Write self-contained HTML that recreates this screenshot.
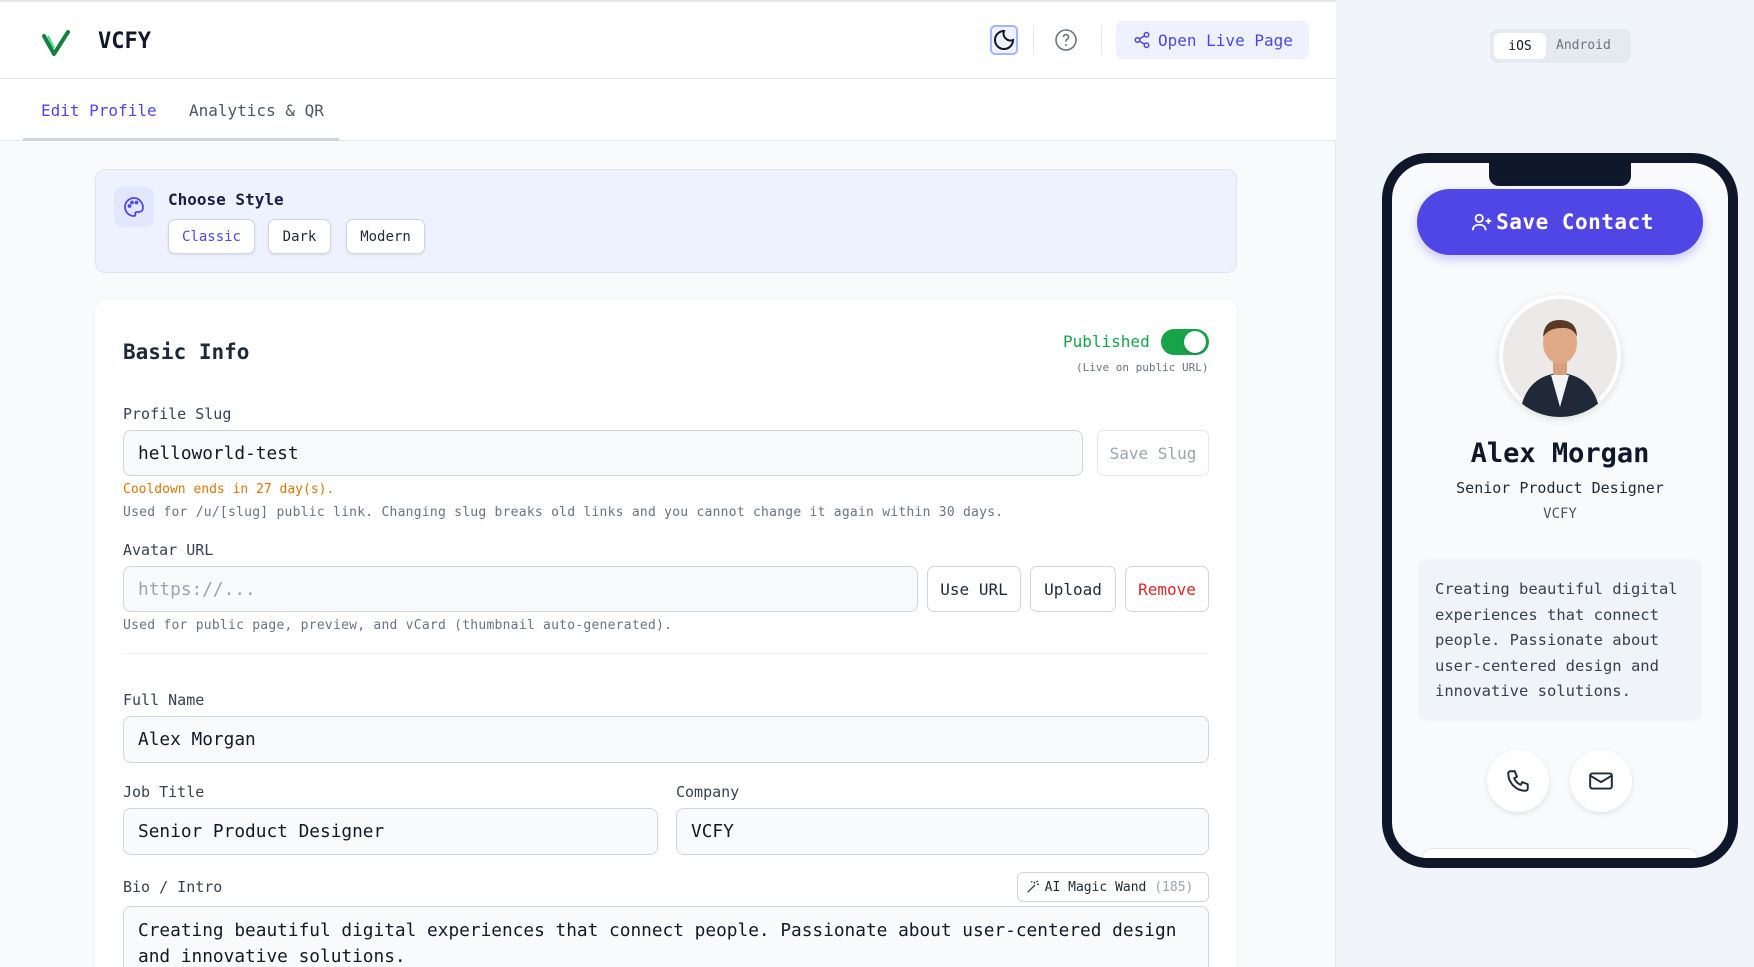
<!DOCTYPE html>
<html style="width:1754px;height:967px;overflow:hidden"><head><meta charset="utf-8"><style>
*{box-sizing:border-box;margin:0;padding:0}
body{width:1754px;height:967px;overflow:hidden;background:#f1f5f9;font-family:"DejaVu Sans Mono","Liberation Mono",monospace;color:#1e293b;position:relative}
.a{position:absolute}
.left{left:0;top:0;width:1336px;height:967px;background:#f8fafc;border-right:1px solid #e2e8f0}
.hdr{left:0;top:0;width:1336px;height:79px;background:#fff;border-bottom:1px solid #e5e7eb;border-top:2px solid #e5e7eb}
.tabs{left:0;top:79px;width:1336px;height:62px;background:#fff;border-bottom:1px solid #e5e7eb}
.lbl{font-size:15px;color:#374151}
.inp{background:#f8fafc;border:1px solid #d1d5db;border-radius:8px;font-size:17.8px;padding-left:14px;display:flex;align-items:center;color:#111827}
.btn{background:#fff;border:1px solid #d1d5db;border-radius:7px;display:flex;align-items:center;justify-content:center;font-size:16px;color:#1f2937}
.help{font-size:13px;color:#6b7280}
</style></head><body>
<div class="a left"></div>
<div class="a hdr"></div>
<svg class="a" style="left:42px;top:30px" width="30" height="26" viewBox="0 0 30 26"><path d="M2 6 L12 24 L26 2" fill="none" stroke="#15803d" stroke-width="4" stroke-linejoin="round" stroke-linecap="round"/><path d="M6 6 L12 18" stroke="#4ade80" stroke-width="2" fill="none"/></svg>
<div class="a" style="left:98px;top:29px;font-size:22px;font-weight:bold;color:#111827">VCFY</div>
<div class="a" style="left:990px;top:25px;width:28px;height:30px;border:2px solid #a5b4fc;border-radius:5px;background:#eef2ff"></div>
<svg class="a" style="left:992px;top:28px" width="24" height="24" viewBox="0 0 24 24"><path d="M12 3a9 9 0 1 0 9 9 7 7 0 0 1-9-9z" fill="none" stroke="#111827" stroke-width="2"/></svg>
<div class="a" style="left:1033px;top:26px;width:1px;height:28px;background:#e5e7eb"></div>
<svg class="a" style="left:1054px;top:28px" width="24" height="24" viewBox="0 0 24 24"><circle cx="12" cy="12" r="10" fill="none" stroke="#6b7280" stroke-width="1.6"/><path d="M9.5 9a2.5 2.5 0 1 1 3.5 2.3c-.8.4-1 1-1 1.7v.5" fill="none" stroke="#6b7280" stroke-width="1.6"/><circle cx="12" cy="17" r="1" fill="#6b7280"/></svg>
<div class="a" style="left:1101px;top:26px;width:1px;height:28px;background:#e5e7eb"></div>
<div class="a" style="left:1116px;top:21px;width:193px;height:38px;background:#eef2ff;border-radius:7px;color:#4f46e5;font-size:16px;display:flex;align-items:center;padding-left:42px">Open Live Page</div>
<svg class="a" style="left:1133px;top:31px" width="18" height="18" viewBox="0 0 24 24" fill="none" stroke="#4f46e5" stroke-width="2"><circle cx="18" cy="5" r="3"/><circle cx="6" cy="12" r="3"/><circle cx="18" cy="19" r="3"/><path d="M8.6 13.5l6.8 4M15.4 6.5l-6.8 4"/></svg>
<div class="a tabs"></div>
<div class="a" style="left:41px;top:101px;font-size:16px;color:#4f46e5">Edit Profile</div>
<div class="a" style="left:189px;top:101px;font-size:16px;color:#4b5563">Analytics &amp; QR</div>
<div class="a" style="left:23px;top:138px;width:316px;height:3px;background:#d1d5db"></div>

<div class="a" style="left:95px;top:169px;width:1142px;height:104px;background:#eef2ff;border:1px solid #dbe3fb;border-radius:10px"></div>
<div class="a" style="left:114px;top:187px;width:40px;height:40px;background:#e0e7ff;border-radius:8px"></div>
<svg class="a" style="left:122px;top:195px" width="24" height="24" viewBox="0 0 24 24" fill="none" stroke="#4f46e5" stroke-width="1.8"><path d="M12 3a9 9 0 0 0 0 18c1.2 0 1.6-.8 1.3-1.8-.4-1 .2-2.2 1.5-2.2H17a4 4 0 0 0 4-4c0-5.5-4-10-9-10z"/><circle cx="7.5" cy="11" r="1" fill="#4f46e5"/><circle cx="10" cy="7.5" r="1" fill="#4f46e5"/><circle cx="14.5" cy="7.5" r="1" fill="#4f46e5"/></svg>
<div class="a" style="left:168px;top:190px;font-size:16px;font-weight:bold;color:#1e1b4b">Choose Style</div>
<div class="a btn" style="left:168px;top:219px;width:87px;height:35px;font-size:14px;color:#4f46e5;box-shadow:0 1px 2px rgba(0,0,0,.1)">Classic</div>
<div class="a btn" style="left:268px;top:219px;width:63px;height:35px;font-size:14px;box-shadow:0 1px 2px rgba(0,0,0,.1)">Dark</div>
<div class="a btn" style="left:346px;top:219px;width:79px;height:35px;font-size:14px;box-shadow:0 1px 2px rgba(0,0,0,.1)">Modern</div>

<div class="a" style="left:95px;top:300px;width:1142px;height:667px;background:#fff;border-radius:12px 12px 0 0;box-shadow:0 1px 3px rgba(0,0,0,.05)"></div>
<div class="a" style="left:123px;top:340px;font-size:21px;font-weight:bold;color:#1f2937">Basic Info</div>
<div class="a" style="left:1063px;top:332px;font-size:16px;color:#16a34a">Published</div>
<div class="a" style="left:1161px;top:329px;width:48px;height:26px;border-radius:13px;background:#16a34a"></div>
<div class="a" style="left:1184px;top:331px;width:22px;height:22px;border-radius:11px;background:#fff;box-shadow:0 1px 2px rgba(0,0,0,.2)"></div>
<div class="a" style="left:1076px;top:361px;font-size:11px;color:#6b7280">(Live on public URL)</div>

<div class="a lbl" style="left:123px;top:405px">Profile Slug</div>
<div class="a inp" style="left:123px;top:430px;width:960px;height:46px">helloworld-test</div>
<div class="a btn" style="left:1097px;top:430px;width:112px;height:46px;color:#9ca3af;border-color:#e5e7eb">Save Slug</div>
<div class="a" style="left:123px;top:482px;font-size:13px;color:#d97706">Cooldown ends in 27 day(s).</div>
<div class="a help" style="left:123px;top:505px;letter-spacing:.25px">Used for /u/[slug] public link. Changing slug breaks old links and you cannot change it again within 30 days.</div>

<div class="a lbl" style="left:123px;top:541px">Avatar URL</div>
<div class="a inp" style="left:123px;top:566px;width:795px;height:46px;color:#9ca3af">https://...</div>
<div class="a btn" style="left:927px;top:566px;width:94px;height:46px">Use URL</div>
<div class="a btn" style="left:1030px;top:566px;width:86px;height:46px">Upload</div>
<div class="a btn" style="left:1125px;top:566px;width:84px;height:46px;color:#dc2626">Remove</div>
<div class="a help" style="left:123px;top:618px;letter-spacing:.25px">Used for public page, preview, and vCard (thumbnail auto-generated).</div>
<div class="a" style="left:123px;top:653px;width:1086px;height:1px;background:#eef0f3"></div>

<div class="a lbl" style="left:123px;top:691px">Full Name</div>
<div class="a inp" style="left:123px;top:716px;width:1086px;height:47px">Alex Morgan</div>
<div class="a lbl" style="left:123px;top:783px">Job Title</div>
<div class="a lbl" style="left:676px;top:783px">Company</div>
<div class="a inp" style="left:123px;top:808px;width:535px;height:47px">Senior Product Designer</div>
<div class="a inp" style="left:676px;top:808px;width:533px;height:47px">VCFY</div>
<div class="a lbl" style="left:123px;top:878px">Bio / Intro</div>
<div class="a btn" style="left:1017px;top:872px;width:192px;height:30px;font-size:13px;border-radius:6px;padding-left:12px">AI Magic Wand <span style="color:#9ca3af">&nbsp;(185)</span></div>
<svg class="a" style="left:1025px;top:879px" width="16" height="16" viewBox="0 0 24 24" fill="none" stroke="#374151" stroke-width="2"><path d="M4 20L15 9M14 4v3M18 8h3M19 3l-2 2M10 3v2"/></svg>
<div class="a inp" style="left:123px;top:906px;width:1086px;height:80px;align-items:flex-start;padding-top:11px;line-height:26px">Creating beautiful digital experiences that connect people. Passionate about user-centered design and innovative solutions.</div>

<!-- right -->
<div class="a" style="left:1490px;top:29px;width:141px;height:34px;background:#e5e9f0;border-radius:8px"></div>
<div class="a" style="left:1494px;top:33px;width:52px;height:26px;background:#fff;border-radius:6px;font-size:13px;display:flex;align-items:center;justify-content:center;color:#111827">iOS</div>
<div class="a" style="left:1556px;top:38px;font-size:13px;color:#6b7280">Android</div>

<div class="a" style="left:1382px;top:153px;width:356px;height:715px;border:10px solid #0f172a;border-radius:46px;background:#f8fafc;overflow:hidden">
 <div class="a" style="left:97px;top:-2px;width:142px;height:25px;background:#0f172a;border-radius:0 0 10px 10px"></div>
 <div class="a" style="left:25px;top:26px;width:286px;height:66px;background:#4f46e5;border-radius:33px;color:#fff;font-size:21px;font-weight:bold;display:flex;align-items:center;justify-content:center;padding-left:30px;box-shadow:0 4px 10px rgba(79,70,229,.3);letter-spacing:.5px">Save Contact</div>
 <svg class="a" style="left:79px;top:48px" width="22" height="22" viewBox="0 0 24 24" fill="none" stroke="#fff" stroke-width="2"><circle cx="9" cy="8" r="4"/><path d="M2 21c0-4 3-6 7-6s7 2 7 6M19 8v6M16 11h6"/></svg>
 <div class="a" style="left:107px;top:132px;width:122px;height:122px;border-radius:50%;background:#fff;box-shadow:0 2px 8px rgba(0,0,0,.12);overflow:hidden">
  <svg width="122" height="122" viewBox="0 0 122 122"><circle cx="61" cy="61" r="57" fill="#eceae8"/><path d="M22 112 Q30 80 61 78 Q92 80 100 112 L100 122 L22 122Z" fill="#1f2937"/><path d="M52 80 L61 112 L70 80Z" fill="#f3f4f6"/><rect x="54" y="62" width="14" height="18" fill="#d9a07e"/><ellipse cx="61" cy="48" rx="17" ry="21" fill="#e0a985"/><path d="M44 42 Q45 24 62 25 Q78 26 78 42 Q74 32 62 33 Q50 33 44 42Z" fill="#5b3a25"/></svg>
 </div>
 <div class="a" style="left:0;width:336px;top:275px;text-align:center;font-size:27px;font-weight:bold;color:#0f172a">Alex Morgan</div>
 <div class="a" style="left:0;width:336px;top:316px;text-align:center;font-size:15px;color:#1f2937">Senior Product Designer</div>
 <div class="a" style="left:0;width:336px;top:343px;text-align:center;font-size:14px;color:#4b5563">VCFY</div>
 <div class="a" style="left:26px;top:396px;width:284px;height:162px;background:#f0f3f7;border-radius:10px;padding:18px 17px;font-size:15.5px;line-height:25.5px;color:#374151">Creating beautiful digital experiences that connect people. Passionate about user-centered design and innovative solutions.</div>
 <div class="a" style="left:95px;top:587px;width:62px;height:62px;border-radius:50%;background:#fff;box-shadow:0 2px 6px rgba(0,0,0,.1)"></div>
 <svg class="a" style="left:113px;top:605px" width="26" height="26" viewBox="0 0 24 24" fill="none" stroke="#1f2937" stroke-width="1.8"><path d="M5 3h4l2 5-2.5 1.5a11 11 0 0 0 6 6L16 13l5 2v4a2 2 0 0 1-2 2A16 16 0 0 1 3 5a2 2 0 0 1 2-2z"/></svg>
 <div class="a" style="left:178px;top:587px;width:62px;height:62px;border-radius:50%;background:#fff;box-shadow:0 2px 6px rgba(0,0,0,.1)"></div>
 <svg class="a" style="left:196px;top:605px" width="26" height="26" viewBox="0 0 24 24" fill="none" stroke="#1f2937" stroke-width="1.8"><rect x="2" y="5" width="20" height="14" rx="2"/><path d="M2 7l10 6 10-6"/></svg>
 <div class="a" style="left:30px;top:685px;width:276px;height:20px;background:#fff;border-radius:10px;border:1px solid #e5e7eb"></div>
</div>
</body></html>
